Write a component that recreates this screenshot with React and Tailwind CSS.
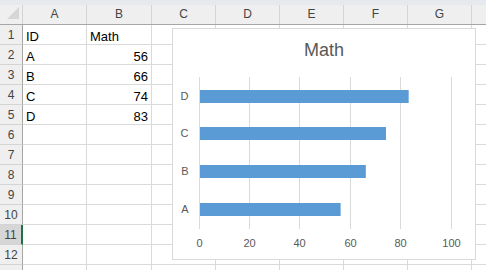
import React from "react";

const cols = [
  { l: "A", w: "w-[64px]" },
  { l: "B", w: "w-[65px]" },
  { l: "C", w: "w-[64px]" },
  { l: "D", w: "w-[64px]" },
  { l: "E", w: "w-[64px]" },
  { l: "F", w: "w-[64px]" },
  { l: "G", w: "w-[64px]" },
  { l: "", w: "w-[64px]" },
];

const data = {
  1: ["ID", "Math"],
  2: ["A", 56],
  3: ["B", 66],
  4: ["C", 74],
  5: ["D", 83],
};

const bars = [
  { k: "D", v: 83, y: 30 },
  { k: "C", v: 74, y: 67 },
  { k: "B", v: 66, y: 105 },
  { k: "A", v: 56, y: 143 },
];

const grid = [
  { x: 26.5, t: "0" },
  { x: 76.5, t: "20" },
  { x: 126.5, t: "40" },
  { x: 177.5, t: "60" },
  { x: 227.5, t: "80" },
  { x: 278.5, t: "100" },
];

function Row({ n }) {
  const d = data[n];
  const sel = n === 11;
  return (
    <div className="flex h-[20px] shrink-0">
      <div
        className={
          sel
            ? "w-[23px] shrink-0 bg-[#d6d6d6] border-r-2 border-r-[#1e7145] border-b border-b-[#d4d4d4] text-center text-[12px] text-[#444] leading-[19px] pt-[1px]"
            : "w-[23px] shrink-0 bg-[#efefef] border-r border-r-[#a6a6a6] border-b border-b-[#d4d4d4] text-center text-[12px] text-[#444] leading-[19px] pt-[1px]"
        }
      >
        {n <= 12 ? n : ""}
      </div>
      {cols.map((c, i) => {
        const v = d && i < 2 ? d[i] : "";
        return (
          <div
            key={i}
            className={`${c.w} shrink-0 border-r border-b border-[#dadada] text-[13px] text-black leading-[19px] pt-[2px] ${
              typeof v === "number" ? "text-right pr-[3px]" : "pl-[3px]"
            }`}
          >
            {v}
          </div>
        );
      })}
    </div>
  );
}

export default function App() {
  const rows = [1, 2, 3, 4, 5, 6, 7, 8, 9, 10, 11, 12, 13];
  return (
    <div className="relative w-[486px] h-[270px] overflow-hidden bg-white font-['Liberation_Sans','Arial',sans-serif]">
      <div className="h-[5px] bg-[#e6e9ed]" />
      <div className="flex h-[20px] bg-[#efefef] border-b border-b-[#a6a6a6]">
        <div className="w-[23px] shrink-0 border-r border-r-[#d4d4d4] relative">
          <svg width="23" height="19" className="block">
            <polygon points="19,2 19,14 7,14" fill="#d6d6d6" />
          </svg>
        </div>
        {cols.map((c, i) => (
          <div
            key={i}
            className={`${c.w} shrink-0 border-r border-r-[#d4d4d4] text-center text-[12px] text-[#444] leading-[19px]`}
          >
            {c.l}
          </div>
        ))}
      </div>
      {rows.map((n) => (
        <Row key={n} n={n} />
      ))}

      <div className="absolute left-[172px] top-[28px] w-[304px] h-[232px] border border-[#d9d9d9] bg-white">
        <div className="pt-[11px] h-[31px] text-center text-[18px] leading-[20px] text-[#595959]">
          Math
        </div>
        <svg width="302" height="199" className="block">
          {grid.slice(1).map((g) => (
            <line key={g.t} x1={g.x} x2={g.x} y1="17" y2="169" stroke="#d9d9d9" strokeWidth="1" />
          ))}
          {bars.map((b) => (
            <rect key={b.k} x="27" y={b.y} width={26.5 + b.v * 2.52 - 27} height="13" fill="#5b9bd5" />
          ))}
          <line x1="26.5" x2="26.5" y1="17" y2="169" stroke="#d9d9d9" strokeWidth="1" />
          {bars.map((b) => (
            <text
              key={b.k}
              x="15.5"
              y={b.y + 9.5}
              textAnchor="end"
              fontSize="11"
              fill="#595959"
              fontFamily="Liberation Sans, Arial, sans-serif"
            >
              {b.k}
            </text>
          ))}
          {grid.map((g) => (
            <text
              key={g.t}
              x={g.x}
              y="186.5"
              textAnchor="middle"
              fontSize="11"
              fill="#595959"
              fontFamily="Liberation Sans, Arial, sans-serif"
            >
              {g.t}
            </text>
          ))}
        </svg>
      </div>
    </div>
  );
}
